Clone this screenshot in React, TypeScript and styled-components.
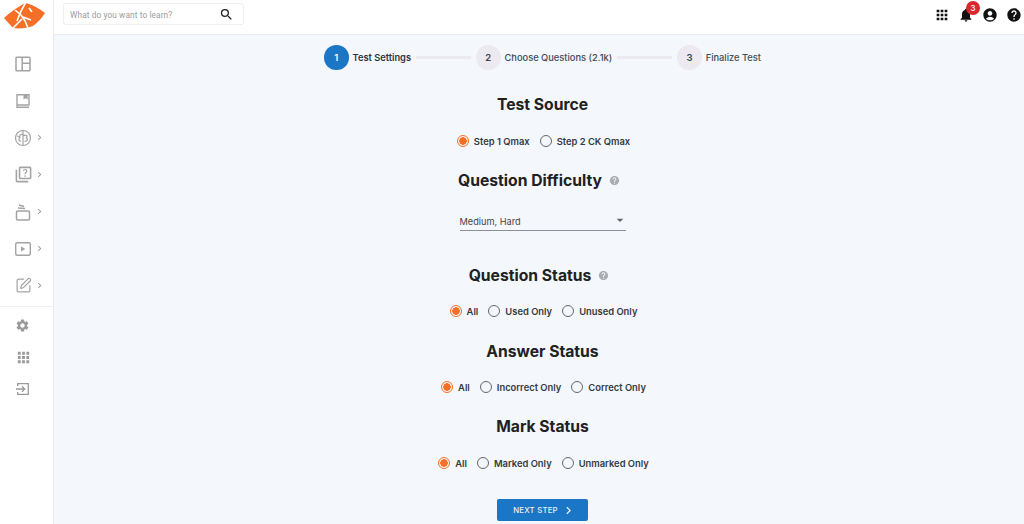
import { ReactNode } from 'react';
import styled, { createGlobalStyle } from 'styled-components';
import {
  MdApps,
  MdNotifications,
  MdAccountCircle,
  MdHelp,
  MdSearch,
  MdArrowDropDown,
  MdChevronRight,
  MdOutlineQuiz,
  MdSettings,
} from 'react-icons/md';
import { SquarePen } from 'lucide-react';

const GlobalStyle = createGlobalStyle`
  html, body {
    margin: 0;
    padding: 0;
    height: 100%;
    overflow: hidden;
    font-family: Inter, Roboto, "Liberation Sans", sans-serif;
    background: #f4f7fb;
  }
`;

const Logo = () => (
  <svg width="46" height="30" viewBox="0 0 46 30">
    <path
      d="M4 18 C10 12 18 7 25 3 C31 4 39 8 45 13 C42 18 38 22 33 26 C27 28 20 29 13 28 C10 25 7 21 4 18 Z"
      fill="#f56f26"
    />
    <path
      d="M26 2 L21 11 L17 21 M15 10 L21 15 L25 21 L28 28 M13 28 L22 19 M23 17 L31 20 M29 8 L32 12"
      stroke="#fff"
      strokeWidth="1.6"
      fill="none"
    />
  </svg>
);

const MosaicIcon = () => (
  <svg width="20" height="20" viewBox="0 0 20 20" fill="none" stroke="currentColor" strokeWidth="1.5">
    <rect x="3" y="3.2" width="14" height="13.6" rx="0.8" />
    <path d="M9.2 3.2 V16.8 M9.2 9.2 H17" />
  </svg>
);

const BookIcon = () => (
  <svg width="20" height="20" viewBox="0 0 20 20" fill="none" stroke="currentColor" strokeWidth="1.4">
    <path d="M4 14 V3.7 H16 V14 H4 V16.3 H16" />
    <path d="M10.5 3.7 V8.5 L12.6 7.2 L14.7 8.5 V3.7 Z" fill="currentColor" stroke="none" />
  </svg>
);

const BrainIcon = () => (
  <svg width="20" height="20" viewBox="0 0 20 20" fill="none" stroke="currentColor" strokeWidth="1.2">
    <circle cx="10" cy="10" r="7.5" />
    <path d="M10 2.5 V17.5 M10 6.5 C7 6 6 8 7 9.5 C5 10.5 6 13.5 8 13 M10 8 C13 6 15 8 13.5 10 C15.5 11 14 14 11.5 13 M4 8 C5 8 6 8.5 7 9.5" />
  </svg>
);

const StackIcon = () => (
  <svg width="20" height="20" viewBox="0 0 20 20" fill="none" stroke="currentColor">
    <rect x="3.5" y="9" width="13" height="9" rx="1.2" strokeWidth="1.5" />
    <path d="M5 6 L12 6.5 M6 3 L11 4.5" strokeWidth="1.4" />
  </svg>
);

const VideoIcon = () => (
  <svg width="20" height="20" viewBox="0 0 20 20" fill="none" stroke="currentColor">
    <rect x="2.7" y="3.7" width="14.6" height="12.6" rx="1.5" strokeWidth="1.4" />
    <path d="M8 7.5 L12.5 10 L8 12.5 Z" fill="currentColor" stroke="none" />
  </svg>
);

const ExitIcon = () => (
  <svg width="16" height="16" viewBox="0 0 16 16" fill="none" stroke="currentColor" strokeWidth="1.3">
    <path d="M2.7 5 V2.7 H13.3 V13.3 H2.7 V11" />
    <path d="M1 8 H9.5 M7 5.3 L9.7 8 L7 10.7" />
  </svg>
);

const navItems: { icon: ReactNode; arrow?: boolean }[] = [
  { icon: <MosaicIcon /> },
  { icon: <BookIcon /> },
  { icon: <BrainIcon />, arrow: true },
  { icon: <MdOutlineQuiz size={19} />, arrow: true },
  { icon: <StackIcon />, arrow: true },
  { icon: <VideoIcon />, arrow: true },
  { icon: <SquarePen size={17} strokeWidth={1.7} />, arrow: true },
];

const App = () => {
  return (
    <Wrapper>
      <GlobalStyle />
      <Sidebar>
        <LogoBox>
          <Logo />
        </LogoBox>
        <NavGroup>
          {navItems.map((item, i) => (
            <NavItem key={i}>
              <NavIcon>{item.icon}</NavIcon>
              {item.arrow && <MdChevronRight size={11} />}
            </NavItem>
          ))}
        </NavGroup>
        <BottomGroup>
          <SmallItem>
            <MdSettings size={15} />
          </SmallItem>
          <SmallItem>
            <MdApps size={17} />
          </SmallItem>
          <SmallItem>
            <ExitIcon />
          </SmallItem>
        </BottomGroup>
      </Sidebar>
      <Content>
        <Header>
          <SearchBox>
            <SearchInput>What do you want to learn?</SearchInput>
            <MdSearch size={15} color="#222" />
          </SearchBox>
          <HeaderIcons>
            <MdApps size={16} />
            <Bell>
              <MdNotifications size={16} />
              <Badge>3</Badge>
            </Bell>
            <MdAccountCircle size={16} />
            <MdHelp size={16} />
          </HeaderIcons>
        </Header>
        <Main>
          <Stepper>
            <StepCircle $active>1</StepCircle>
            <StepLabel $active>Test Settings</StepLabel>
            <StepLine />
            <StepCircle>2</StepCircle>
            <StepLabel>Choose Questions (2.1k)</StepLabel>
            <StepLine />
            <StepCircle>3</StepCircle>
            <StepLabel>Finalize Test</StepLabel>
          </Stepper>

          <Title $top={22}>Test Source</Title>
          <RadioRow $top={15}>
            <Radio $on>Step 1 Qmax</Radio>
            <Radio>Step 2 CK Qmax</Radio>
          </RadioRow>

          <Title $top={17} $help>
            Question Difficulty
            <MdHelp size={11} color="#a9adb1" />
          </Title>
          <SelectBox>
            <span>Medium, Hard</span>
            <MdArrowDropDown size={16} color="#666" />
          </SelectBox>

          <Title $top={32} $help>
            Question Status
            <MdHelp size={11} color="#a9adb1" />
          </Title>
          <RadioRow $top={14}>
            <Radio $on>All</Radio>
            <Radio>Used Only</Radio>
            <Radio>Unused Only</Radio>
          </RadioRow>

          <Title $top={18}>Answer Status</Title>
          <RadioRow $top={14}>
            <Radio $on>All</Radio>
            <Radio>Incorrect Only</Radio>
            <Radio>Correct Only</Radio>
          </RadioRow>

          <Title $top={17}>Mark Status</Title>
          <RadioRow $top={15}>
            <Radio $on>All</Radio>
            <Radio>Marked Only</Radio>
            <Radio>Unmarked Only</Radio>
          </RadioRow>

          <NextButton>
            NEXT STEP
            <MdChevronRight size={15} />
          </NextButton>
        </Main>
      </Content>
    </Wrapper>
  );
};

export default App;

const Wrapper = styled.div`
  display: flex;
  width: 1024px;
  height: 524px;
  overflow: hidden;
`;

const Sidebar = styled.aside`
  width: 53px;
  flex: none;
  background: #fff;
  border-right: 1px solid #e9edf1;
`;

const LogoBox = styled.div`
  height: 30px;
  display: flex;
  align-items: center;
`;

const NavGroup = styled.div`
  padding: 15px 0 2px;
  border-bottom: 1px solid #f0f1f3;
`;

const NavItem = styled.div`
  height: 37px;
  display: flex;
  align-items: center;
  padding-left: 13px;
  color: #a3a3a3;

  > svg {
    color: #9a9a9a;
  }
`;

const NavIcon = styled.span`
  width: 20px;
  height: 20px;
  display: flex;
  align-items: center;
  justify-content: center;
  margin-right: 1px;
`;

const BottomGroup = styled.div`
  padding-top: 2px;
`;

const SmallItem = styled.div`
  height: 32px;
  display: flex;
  align-items: center;
  padding-left: 15px;
  color: #9a9a9a;
`;

const Content = styled.div`
  flex: 1;
  min-width: 0;
  display: flex;
  flex-direction: column;
`;

const Header = styled.header`
  height: 34px;
  flex: none;
  background: #fff;
  border-bottom: 1px solid #e9edf1;
  display: flex;
  align-items: center;
  justify-content: space-between;
  padding: 0 2px 0 9px;
`;

const SearchBox = styled.div`
  width: 181px;
  height: 22px;
  box-sizing: border-box;
  border: 1px solid #eeeff1;
  border-radius: 3px;
  display: flex;
  align-items: center;
  justify-content: space-between;
  padding: 0 9px 0 6px;
  margin-top: -6px;
`;

const SearchInput = styled.span`
  font-family: Roboto, sans-serif;
  font-size: 8.3px;
  letter-spacing: 0.1px;
  padding-top: 1px;
  color: #9b9b9b;
`;

const HeaderIcons = styled.div`
  display: flex;
  align-items: center;
  gap: 8px;
  color: #111;
  margin-top: -4px;
`;

const Bell = styled.span`
  position: relative;
  display: flex;
`;

const Badge = styled.span`
  position: absolute;
  top: -6px;
  left: 8px;
  width: 14px;
  height: 14px;
  border-radius: 50%;
  background: #d9272e;
  color: #fff;
  font-size: 8px;
  font-weight: 500;
  display: flex;
  align-items: center;
  justify-content: center;
`;

const Main = styled.main`
  flex: 1;
  min-height: 0;
  background: #f4f7fb;
  display: flex;
  flex-direction: column;
  align-items: center;
  padding: 10px 0 0 7px;
  color: #212529;
`;

const Stepper = styled.div`
  display: flex;
  align-items: center;
  height: 25px;
`;

const StepCircle = styled.span<{ $active?: boolean }>`
  width: 24.5px;
  height: 24.5px;
  border-radius: 50%;
  display: flex;
  align-items: center;
  justify-content: center;
  font-size: 9.5px;
  font-weight: 600;
  background: ${(p) => (p.$active ? '#1b76c5' : '#eceaf0')};
  color: ${(p) => (p.$active ? '#fff' : '#3a4350')};
`;

const StepLabel = styled.span<{ $active?: boolean }>`
  margin-left: 4px;
  font-size: 9.3px;
  font-weight: ${(p) => (p.$active ? 600 : 500)};
  color: ${(p) => (p.$active ? '#2c3440' : '#444b55')};
`;

const StepLine = styled.span`
  width: 55px;
  height: 3px;
  margin: 0 5px;
  background: #eceaf0;
`;

const Title = styled.h2<{ $top: number; $help?: boolean }>`
  margin: ${(p) => p.$top}px ${(p) => (p.$help ? '7px' : '0')} 0 0;
  height: 24px;
  box-sizing: border-box;
  padding-top: 2px;
  line-height: 22px;
  font-size: 15.7px;
  font-weight: 700;
  color: #212121;
  display: flex;
  align-items: center;
  gap: 7px;

  > svg {
    margin-top: -2px;
  }
`;

const RadioRow = styled.div<{ $top: number }>`
  margin-top: ${(p) => p.$top}px;
  height: 20px;
  padding-left: 2px;
  display: flex;
  align-items: center;
  gap: 10px;
`;

const Radio = styled.span<{ $on?: boolean }>`
  display: flex;
  align-items: center;
  font-size: 9.4px;
  font-weight: 600;
  color: #333a42;

  &::before {
    content: '';
    width: 12px;
    height: 12px;
    box-sizing: border-box;
    border-radius: 50%;
    margin-right: 5px;
    border: 1px solid ${(p) => (p.$on ? '#f56f26' : '#666')};
    background: ${(p) =>
      p.$on ? 'radial-gradient(circle, #f56f26 0 3.5px, transparent 4px)' : 'transparent'};
  }
`;

const SelectBox = styled.div`
  margin-top: 17px;
  width: 166px;
  height: 22px;
  box-sizing: border-box;
  border-bottom: 1px solid #8b9097;
  display: flex;
  align-items: center;
  justify-content: space-between;
  font-size: 9.2px;
  color: #444;

  > span {
    padding-top: 3px;
  }

  > svg {
    margin-right: -2px;
  }
`;

const NextButton = styled.button`
  margin-top: 26px;
  width: 91px;
  height: 22px;
  flex: none;
  border: none;
  border-radius: 2px;
  background: #1b76c5;
  color: #e8f1fa;
  font-family: inherit;
  font-size: 7.8px;
  font-weight: 500;
  letter-spacing: 0.2px;
  display: flex;
  align-items: center;
  justify-content: center;
  gap: 3px;
  padding: 0 0 0 4px;
`;
